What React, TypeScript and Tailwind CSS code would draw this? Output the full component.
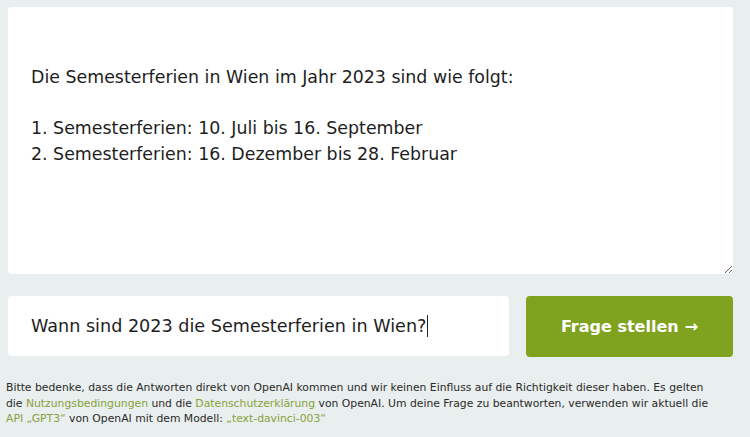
const answer =
  '\n\nDie Semesterferien in Wien im Jahr 2023 sind wie folgt:\n\n1. Semesterferien: 10. Juli bis 16. September\n2. Semesterferien: 16. Dezember bis 28. Februar'

export default function App() {
  return (
    <div className="h-[437px] w-[750px] overflow-hidden bg-[#e9eeee] px-2 pt-[7px] font-['DejaVu_Sans',sans-serif] text-[#1e1e1e]">
      <textarea
        readOnly
        value={answer}
        className="block h-[267px] w-[725px] resize-y rounded-[4px] bg-white px-[23px] pt-[7px] text-[17.4px] leading-[25.5px] text-[#1e1e1e] outline-none"
      />

      <div className="mt-[22px] flex w-[725px] gap-[17px]">
        <div className="flex h-[60px] w-[501px] items-center rounded-[4px] bg-white px-[23px] text-[17.6px]">
          <span>Wann sind 2023 die Semesterferien in Wien?</span>
          <span className="ml-px inline-block h-[22px] w-px bg-[#222]" />
        </div>
        <button className="flex h-[61px] flex-1 items-center justify-center gap-1.5 rounded-[4px] bg-[#80a31f] text-[16px] font-bold text-white">
          Frage stellen <span>→</span>
        </button>
      </div>

      <p className="-ml-[2px] mt-[23px] text-[10.8px] leading-[15.5px] text-[#2a2a2a]">
        Bitte bedenke, dass die Antworten direkt von OpenAI kommen und wir keinen Einfluss auf die Richtigkeit dieser haben. Es gelten
        <br />
        die <span className="text-[#86a23a]">Nutzungsbedingungen</span> und die{' '}
        <span className="text-[#86a23a]">Datenschutzerklärung</span> von OpenAI. Um deine Frage zu beantworten, verwenden wir aktuell die
        <br />
        <span className="text-[#86a23a]">API „GPT3“</span> von OpenAI mit dem Modell:{' '}
        <span className="text-[#86a23a]">„text-davinci-003“</span>
      </p>
    </div>
  )
}
